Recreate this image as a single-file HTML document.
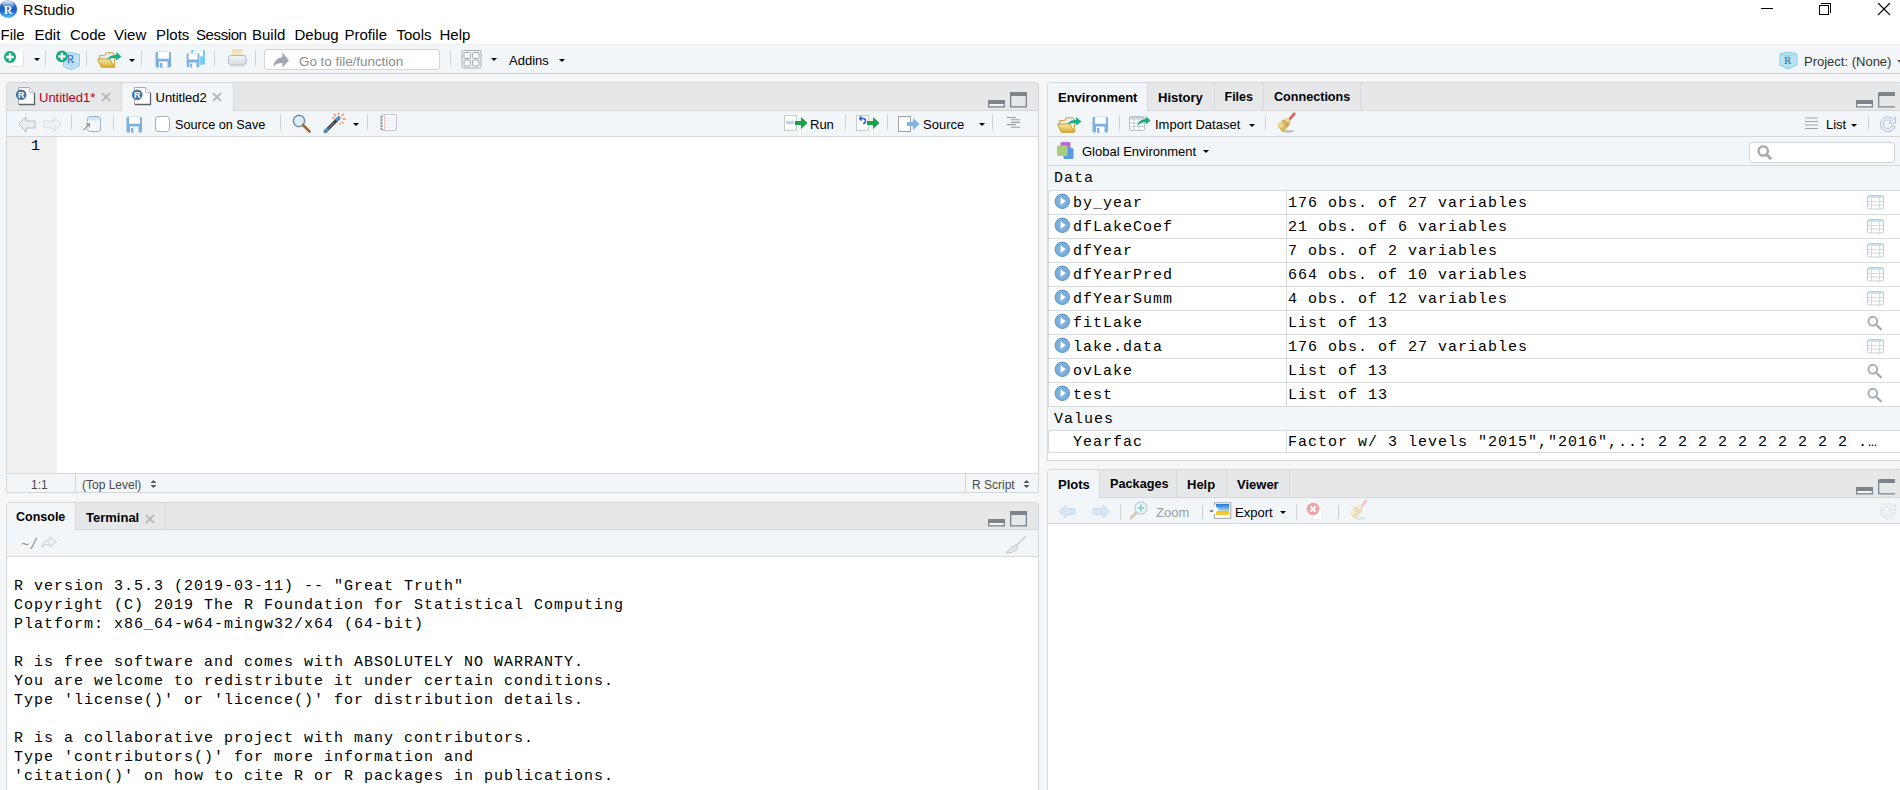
<!DOCTYPE html>
<html><head><meta charset="utf-8">
<style>
*{box-sizing:border-box;margin:0;padding:0}
html,body{width:1900px;height:790px;overflow:hidden;background:#f5f6f8;font-family:"Liberation Sans",sans-serif;color:#000}
.a{position:absolute}
.t{position:absolute;white-space:pre;line-height:1}
.mono{font-family:"Liberation Mono",monospace;font-size:15px;letter-spacing:1px}
.sep{position:absolute;width:1px;background:linear-gradient(#f3f6f8,#c9ced2 20%,#c9ced2 80%,#f3f6f8)}
.pane{position:absolute;border:1px solid #d3d7da;border-radius:3px 3px 0 0;background:#fff;overflow:hidden}
.tabs{position:absolute;left:0;right:0;top:0;background:#e6e7e9;border-bottom:1px solid #d3d7da}
.tab{position:absolute;top:0;bottom:-1px;border-right:1px solid #d3d7da}
.tab.act{background:#f3f6f8;border-bottom:1px solid #f3f6f8}
.tb{position:absolute;left:0;right:0;background:#f3f6f8;border-bottom:1px solid #d3d7da}
.bold{font-weight:bold}
.dd{position:absolute;width:0;height:0;border-left:3px solid transparent;border-right:3px solid transparent;border-top:3px solid #000}
</style></head>
<body>
<!-- title bar -->
<div class="a" style="left:0;top:0;width:1900px;height:44px;background:#fff"></div>
<svg class="a" style="left:0;top:0" width="19" height="19" viewBox="0 0 19 19"><defs><linearGradient id="rg" x1="0" y1="0" x2="0" y2="1"><stop offset="0" stop-color="#3a78d0"/><stop offset="0.55" stop-color="#1d5cc4"/><stop offset="1" stop-color="#5cc0ee"/></linearGradient><linearGradient id="rh" x1="0" y1="0" x2="0" y2="1"><stop offset="0" stop-color="#ffffff" stop-opacity="0.85"/><stop offset="1" stop-color="#ffffff" stop-opacity="0.05"/></linearGradient></defs><circle cx="8.2" cy="9.2" r="8.9" fill="url(#rg)"/><ellipse cx="8.2" cy="4.2" rx="6" ry="3.6" fill="url(#rh)"/><text x="8.1" y="13.6" font-family="Liberation Serif" font-weight="bold" font-size="12" fill="#fff" text-anchor="middle">R</text></svg>
<div class="t" style="left:23px;top:3px;font-size:14.5px">RStudio</div>
<!-- window controls -->
<div class="a" style="left:1761px;top:8px;width:12px;height:1px;background:#000"></div>
<div class="a" style="left:1819px;top:5px;width:10px;height:10px;border:1px solid #000"></div>
<div class="a" style="left:1821px;top:3px;width:10px;height:10px;border-top:1px solid #000;border-right:1px solid #000"></div>
<svg class="a" style="left:1877px;top:2px" width="14" height="14"><path d="M1 1L13 13M13 1L1 13" stroke="#000" stroke-width="1.1"/></svg>
<!-- menu -->
<div class="t" style="left:0.5px;top:27px;font-size:15px">File</div>
<div class="t" style="left:34.5px;top:27px;font-size:15px">Edit</div>
<div class="t" style="left:70px;top:27px;font-size:15px">Code</div>
<div class="t" style="left:114px;top:27px;font-size:15px">View</div>
<div class="t" style="left:156px;top:27px;font-size:15px">Plots</div>
<div class="t" style="left:196px;top:27px;font-size:15px;letter-spacing:-0.4px">Session</div>
<div class="t" style="left:252px;top:27px;font-size:15px">Build</div>
<div class="t" style="left:294.5px;top:27px;font-size:15px">Debug</div>
<div class="t" style="left:344.5px;top:27px;font-size:15px">Profile</div>
<div class="t" style="left:396.5px;top:27px;font-size:15px">Tools</div>
<div class="t" style="left:439.5px;top:27px;font-size:15px">Help</div>

<!-- main toolbar -->
<div class="a" style="left:0;top:44px;width:1900px;height:30px;background:#f3f6f8;border-bottom:1px solid #cfd3d6;border-top:1px solid #eceef0"></div>
<div id="maintb">
 <!-- new file -->
 <div class="a" style="left:10px;top:51px;width:14px;height:16px;background:#fff;border:1px solid #dfe3e6;border-left:none;border-top:none"></div>
 <svg class="a" style="left:3px;top:50px" width="14" height="14"><circle cx="7" cy="7" r="6" fill="#16ac7c"/><path d="M7 3.2V10.8M3.2 7H10.8" stroke="#fff" stroke-width="2.4"/></svg>
 <div class="dd" style="left:34px;top:58px"></div>
 <div class="sep" style="left:45px;top:49px;height:19px"></div>
 <!-- new project -->
 <svg class="a" style="left:55px;top:50px" width="26" height="21"><path d="M8 3.5L16.5 2.5L24.5 4.5V15.5L16.5 19.8L8.5 16.5Z" fill="#c4e4f6" stroke="#8ccbe8" stroke-width="1"/><path d="M8 3.5L16 5.5L24.5 4.5M16 5.5V19.8M8.5 13L16 15.5L24.5 13" stroke="#9fd6ee" stroke-width="0.8" fill="none"/><text x="15.6" y="12.8" font-family="Liberation Serif" font-size="11.5" fill="#2f5fb8" text-anchor="middle">R</text><circle cx="6.9" cy="6.4" r="5.9" fill="#16ac7c"/><path d="M6.9 2.8V10M3.3 6.4H10.5" stroke="#fff" stroke-width="2.4"/></svg>
 <div class="sep" style="left:86px;top:49px;height:19px"></div>
 <!-- open -->
 <svg class="a" style="left:96.5px;top:51.5px" width="26" height="17" viewBox="0 0 26 17"><defs><linearGradient id="fg1" x1="0" y1="0" x2="0" y2="1"><stop offset="0" stop-color="#f7eaa8"/><stop offset="1" stop-color="#dcae32"/></linearGradient></defs><path d="M2.6 7V3.6H7.6L9.2 0.8H16L17.6 3V15" fill="#ebebea" stroke="#c9a132" stroke-width="1"/><path d="M0.6 7H12.6L17.4 15.2H4.4Z" fill="url(#fg1)" stroke="#c49a2a" stroke-width="1"/><path d="M10.6 7.2Q12.6 3 19 3V0.2L24.6 4.4L19 8.6V6Q14.2 6 10.6 7.2Z" fill="#17b088"/></svg>
 <div class="dd" style="left:129px;top:59px"></div>
 <div class="sep" style="left:141px;top:49px;height:19px"></div>
 <!-- save -->
 <svg class="a" style="left:155px;top:51px" width="17" height="18"><rect x="0.5" y="0.8" width="15.5" height="15.8" rx="1.6" fill="#7db1e2"/><rect x="3" y="1" width="11" height="6.7" fill="#fff"/><rect x="4" y="10.5" width="8.5" height="6.1" fill="#fff"/><rect x="5" y="12" width="2.5" height="4.6" fill="#7db1e2"/></svg>
 <!-- save all -->
 <svg class="a" style="left:185px;top:49px" width="22" height="20"><rect x="6" y="1" width="14" height="14.7" rx="1.5" fill="#78c9ee"/><rect x="8.5" y="1.3" width="9.5" height="6" fill="#fff"/><path d="M18 7.3V15.7" stroke="#fff" stroke-width="0"/><rect x="1.3" y="4.1" width="13.4" height="14.5" rx="1.5" fill="#7db1e2" stroke="#fff" stroke-width="0.6"/><rect x="3.6" y="4.5" width="9" height="6" fill="#fff"/><rect x="4.3" y="13.5" width="7.2" height="5" fill="#fff"/><rect x="5.2" y="14.6" width="2" height="3.9" fill="#7db1e2"/></svg>
 <div class="sep" style="left:214px;top:49px;height:19px"></div>
 <!-- print -->
 <svg class="a" style="left:227px;top:48px" width="21" height="20"><defs><linearGradient id="pp" x1="0" y1="0" x2="0" y2="1"><stop offset="0" stop-color="#f0dcaa"/><stop offset="1" stop-color="#f6ecd0"/></linearGradient><linearGradient id="pb" x1="0" y1="0" x2="0" y2="1"><stop offset="0" stop-color="#f4f6f9"/><stop offset="1" stop-color="#d6dce4"/></linearGradient></defs><rect x="4.8" y="1.2" width="10.3" height="8.6" fill="url(#pp)"/><rect x="1.5" y="7.5" width="17.5" height="9" rx="2" fill="url(#pb)" stroke="#aeb6c0" stroke-width="1"/><rect x="3" y="16.3" width="14.5" height="2.4" fill="#d4d9df"/></svg>
 <div class="sep" style="left:255px;top:49px;height:19px"></div>
 <!-- go to file -->
 <div class="a" style="left:264px;top:49px;width:176px;height:21px;background:#fff;border:1px solid #d3d7da;border-radius:3px"></div>
 <svg class="a" style="left:272px;top:51px" width="19" height="18"><path d="M1 16.2Q2.5 7 10.4 6V1.5L17 9.5L10.4 16.8V12Q4 12 1 16.2Z" fill="#a0a6b2"/></svg>
 <div class="t" style="left:299px;top:55px;font-size:13.4px;color:#8a8d90">Go to file/function</div>
 <div class="sep" style="left:450px;top:49px;height:19px"></div>
 <!-- grid -->
 <svg class="a" style="left:461px;top:50px" width="21" height="19"><rect x="1" y="0.5" width="19" height="17.5" rx="1.5" fill="none" stroke="#a6acb2"/><rect x="3" y="2.5" width="6.5" height="6" rx="1" fill="none" stroke="#a6acb2"/><rect x="11.5" y="2.5" width="6.5" height="6" rx="1" fill="none" stroke="#a6acb2"/><rect x="3" y="10" width="6.5" height="6" rx="1" fill="none" stroke="#a6acb2"/><rect x="11.5" y="10" width="6.5" height="6" rx="1" fill="none" stroke="#a6acb2"/></svg>
 <div class="dd" style="left:491px;top:58px"></div>
 <div class="t" style="left:509px;top:54px;font-size:13px">Addins</div>
 <div class="dd" style="left:559px;top:59px"></div>
 <!-- project -->
 <svg class="a" style="left:1778px;top:51px" width="21" height="19"><path d="M2 3L10 1L19 3L19 14L10 18L2 14Z" fill="#b9e3f3" stroke="#86cde6" stroke-width="1"/><path d="M10 4V18M2 3L10 5L19 3" stroke="#8fd3ea" stroke-width="0.8" fill="none"/><text x="6" y="13" font-family="Liberation Serif" font-size="11" fill="#3a67b0">R</text></svg>
 <div class="t" style="left:1804px;top:55px;font-size:13px;color:#333">Project: (None)</div>
 <div class="dd" style="left:1897px;top:60px;border-top-color:#555"></div>
</div>

<!-- EDITOR PANE -->
<div class="a" style="left:6px;top:82px;width:1033px;height:411px;border:1px solid #d3d7da;border-radius:3px 3px 0 0;background:#fff"></div>
<div class="a" style="left:7px;top:83px;width:1031px;height:28px;background:#e6e7e9;border-bottom:1px solid #d3d7da;border-radius:2px 2px 0 0"></div>
<div class="a" style="left:7px;top:83px;width:115px;height:27px;border-right:1px solid #d6dadd"></div>
<div class="a" style="left:121px;top:83px;width:113px;height:28px;background:#f3f6f8;border-left:1px solid #d6dadd;border-right:1px solid #d6dadd;border-radius:3px 3px 0 0"></div>
<svg class="a" style="left:14px;top:87px" width="22" height="19"><path d="M4.5 0.5H15.5L20.5 5.5V17.5H4.5Z" fill="#fff" stroke="#a8acb0" stroke-width="1"/><path d="M5 17.5H20.5V5.5" stroke="#5f6468" stroke-width="1.3" fill="none"/><path d="M15.5 0.5V5.5H20.5" fill="#f2f2f2" stroke="#b8bcc0" stroke-width="0.8"/><circle cx="7.2" cy="7.8" r="5.3" fill="#4a72a6"/><text x="7.2" y="11.3" font-family="Liberation Sans" font-weight="bold" font-size="9" fill="#fff" text-anchor="middle">R</text></svg>
<div class="t" style="left:39px;top:91px;font-size:13px;color:#b4001e">Untitled1*</div>
<svg class="a" style="left:101px;top:92px" width="10" height="10"><path d="M1 1L9 9M9 1L1 9" stroke="#b9b9b9" stroke-width="1.8"/></svg>
<svg class="a" style="left:130px;top:87px" width="22" height="19"><path d="M4.5 0.5H15.5L20.5 5.5V17.5H4.5Z" fill="#fff" stroke="#a8acb0" stroke-width="1"/><path d="M5 17.5H20.5V5.5" stroke="#5f6468" stroke-width="1.3" fill="none"/><path d="M15.5 0.5V5.5H20.5" fill="#f2f2f2" stroke="#b8bcc0" stroke-width="0.8"/><circle cx="7.2" cy="7.8" r="5.3" fill="#4a72a6"/><text x="7.2" y="11.3" font-family="Liberation Sans" font-weight="bold" font-size="9" fill="#fff" text-anchor="middle">R</text></svg>
<div class="t" style="left:155.5px;top:91px;font-size:13px">Untitled2</div>
<svg class="a" style="left:212px;top:92px" width="10" height="10"><path d="M1 1L9 9M9 1L1 9" stroke="#b9b9b9" stroke-width="1.8"/></svg>
<svg class="a" style="left:987px;top:92px" width="40" height="17"><rect x="1.65" y="8.65" width="15.7" height="6.2" fill="#f4f4f4" stroke="#7d848a" stroke-width="1.3"/><path d="M1 12V10Q1 8 3 8H16Q18 8 18 10V12Z" fill="#7d848a"/><rect x="23.65" y="0.65" width="15.7" height="14.2" fill="none" stroke="#7d848a" stroke-width="1.3"/><path d="M23 4V2Q23 0 25 0H38Q40 0 40 2V4Z" fill="#7d848a"/></svg>
<!-- editor toolbar -->
<div class="a" style="left:7px;top:111px;width:1031px;height:26px;background:#f3f6f8;border-bottom:1px solid #d3d7da"></div>
<svg class="a" style="left:18px;top:116px" width="44" height="17"><path d="M1 8L8 1V5H17V12H8V16Z" fill="#ebedef" stroke="#b4b9be" stroke-width="1"/><path d="M43 8L36 1V5H26V12H36V16Z" fill="#eef1f3" stroke="#d6dadd" stroke-width="1"/></svg>
<div class="sep" style="left:71px;top:113px;height:19px"></div>
<svg class="a" style="left:82px;top:116px" width="20" height="17"><rect x="5.5" y="0.5" width="13" height="15" rx="2.5" fill="#f4f6f9" stroke="#9fb3c8"/><rect x="6" y="1" width="12" height="3.5" rx="1.5" fill="#cfe5f8"/><path d="M1.5 14L7 8.5M4 8H7.5V11.5" stroke="#fff" stroke-width="3.2" fill="none"/><path d="M1.5 14L7 8.5M4 8H7.5V11.5" stroke="#8a97a5" stroke-width="1.3" fill="none"/></svg>
<div class="sep" style="left:113px;top:113px;height:19px"></div>
<svg class="a" style="left:126px;top:116px" width="17" height="18"><rect x="0.5" y="0.8" width="15.5" height="15.8" rx="1.6" fill="#7db1e2"/><rect x="3" y="1" width="11" height="6.7" fill="#fff"/><rect x="4" y="10.5" width="8.5" height="6.1" fill="#fff"/><rect x="5" y="12" width="2.5" height="4.6" fill="#7db1e2"/></svg>
<div class="a" style="left:155px;top:116px;width:15px;height:16px;background:#fff;border:1px solid #a9aeb3;border-radius:3px"></div>
<div class="t" style="left:175px;top:119px;font-size:12.7px">Source on Save</div>
<div class="sep" style="left:280px;top:113px;height:19px"></div>
<svg class="a" style="left:292px;top:114px" width="20" height="20"><circle cx="7" cy="7" r="5.6" fill="#dfeefa" stroke="#7f95aa" stroke-width="1.6"/><path d="M11 11L17.5 17.5" stroke="#9a6a3a" stroke-width="2.6" stroke-linecap="round"/></svg>
<svg class="a" style="left:323px;top:110px" width="26" height="24"><path d="M2.4 21.4L15.7 8.1" stroke="#3c4248" stroke-width="3.4" stroke-linecap="round"/><path d="M3.6 20.2L11 12.8" stroke="#8a9096" stroke-width="1"/><path d="M2.4 21.4L3.9 19.9M14.4 9.4L15.7 8.1" stroke="#4a8ec4" stroke-width="3.4" stroke-linecap="round"/><path d="M15.6 2.8V5.2M18.6 6L21 3.6M19.6 9H22.6M18.6 11.6L20.6 13.6M16.4 13L17.2 14.6M9 7.6L12 8.2M10.6 3.6L13 6" stroke="#f3875a" stroke-width="1.3"/></svg>
<div class="dd" style="left:353px;top:123px"></div>
<div class="sep" style="left:367px;top:113px;height:19px"></div>
<svg class="a" style="left:379px;top:114px" width="19" height="18"><rect x="2.5" y="0.5" width="15" height="16" rx="1.5" fill="#fff" stroke="#c2c7cc"/><path d="M5 4H16M5 7H16M5 10H16M5 13H16" stroke="#d8e4f0" stroke-width="1"/><path d="M5.5 1V16" stroke="#f0b0b0" stroke-width="0.8"/><path d="M1 3H4M1 6H4M1 9H4M1 12H4M1 15H4" stroke="#7a7f85" stroke-width="1"/></svg>
<!-- run -->
<svg class="a" style="left:784px;top:115px" width="25" height="17"><rect x="0.5" y="0.5" width="12" height="15" fill="#fff" stroke="#c8cdd2"/><rect x="2" y="6" width="8" height="3" fill="#b8d4f0"/><path d="M11 6H17V2L23.5 8L17 14V10H11Z" fill="#1aa04a"/></svg>
<div class="t" style="left:810px;top:118px;font-size:13px">Run</div>
<div class="sep" style="left:845px;top:113px;height:19px"></div>
<svg class="a" style="left:856px;top:115px" width="25" height="17"><rect x="0.5" y="0.5" width="12" height="15" fill="#fff" stroke="#c8cdd2"/><path d="M3.5 3.5L5.5 1.5M3.5 3.5L5.5 5.5M3.5 3.5H7Q9.5 3.5 9.5 6Q9.5 8.5 7 8.5" stroke="#2a62d8" stroke-width="1.6" fill="none"/><path d="M11 6H17V2L23.5 8L17 14V10H11Z" fill="#1aa04a"/></svg>
<div class="sep" style="left:887px;top:113px;height:19px"></div>
<svg class="a" style="left:898px;top:116px" width="25" height="17"><rect x="0.5" y="0.5" width="12" height="15" fill="#fff" stroke="#9ea4aa"/><path d="M9 6H15V2L21.5 8L15 14V10H9Z" fill="#7fb4e6"/></svg>
<div class="t" style="left:923px;top:118px;font-size:13px">Source</div>
<div class="dd" style="left:979px;top:123px"></div>
<div class="sep" style="left:992px;top:113px;height:19px"></div>
<svg class="a" style="left:1006px;top:116px" width="15" height="13"><path d="M1 1.5H10M5 3.8H14M5 6.4H14M1 8.6H10M5 11.3H14" stroke="#9aa0a5" stroke-width="1.1"/></svg>
<!-- gutter -->
<div class="a" style="left:7px;top:137px;width:50px;height:336px;background:#f0f0f0"></div>
<div class="t mono" style="left:31px;top:139px">1</div>
<!-- status bar -->
<div class="a" style="left:7px;top:473px;width:1031px;height:19px;background:#f3f6f8;border-top:1px solid #d3d7da"></div>
<div class="t" style="left:31px;top:479px;font-size:12px;color:#4a4a4a">1:1</div>
<div class="a" style="left:75px;top:474px;width:1px;height:18px;background:#d3d7da"></div>
<div class="t" style="left:82px;top:479px;font-size:12px;color:#4a4a4a">(Top Level)</div>
<svg class="a" style="left:150px;top:479px" width="7" height="10"><path d="M0.5 4L3.5 1L6.5 4ZM0.5 6L3.5 9L6.5 6Z" fill="#555"/></svg>
<div class="a" style="left:965px;top:474px;width:1px;height:18px;background:#d3d7da"></div>
<div class="t" style="left:972px;top:479px;font-size:12px;color:#4a4a4a">R Script</div>
<svg class="a" style="left:1023px;top:479px" width="7" height="10"><path d="M0.5 4L3.5 1L6.5 4ZM0.5 6L3.5 9L6.5 6Z" fill="#555"/></svg>
<!-- CONSOLE PANE -->
<div class="a" style="left:6px;top:502px;width:1033px;height:300px;border:1px solid #d3d7da;border-radius:3px 3px 0 0;background:#fff"></div>
<div class="a" style="left:7px;top:503px;width:1031px;height:27px;background:#e6e7e9;border-bottom:1px solid #d3d7da;border-radius:2px 2px 0 0"></div>
<div class="a" style="left:7px;top:503px;width:69px;height:27px;background:#f3f6f8;border-right:1px solid #d6dadd;border-radius:2px 3px 0 0"></div>
<div class="a" style="left:76px;top:503px;width:90px;height:26px;border-right:1px solid #d6dadd;border-radius:0 3px 0 0"></div>
<div class="t bold" style="left:16px;top:511px;font-size:12.5px">Console</div>
<div class="t bold" style="left:86px;top:511px;font-size:13px">Terminal</div>
<svg class="a" style="left:145px;top:514px" width="10" height="10"><path d="M1 1L9 9M9 1L1 9" stroke="#b9b9b9" stroke-width="1.8"/></svg>
<svg class="a" style="left:987px;top:511px" width="40" height="17"><rect x="1.65" y="8.65" width="15.7" height="6.2" fill="#f4f4f4" stroke="#7d848a" stroke-width="1.3"/><path d="M1 12V10Q1 8 3 8H16Q18 8 18 10V12Z" fill="#7d848a"/><rect x="23.65" y="0.65" width="15.7" height="14.2" fill="none" stroke="#7d848a" stroke-width="1.3"/><path d="M23 4V2Q23 0 25 0H38Q40 0 40 2V4Z" fill="#7d848a"/></svg>
<div class="a" style="left:7px;top:530px;width:1031px;height:27px;background:#f3f6f8;border-bottom:1px solid #d3d7da"></div>
<div class="t mono" style="left:21px;top:538px;color:#8a8a8a;font-size:14px;letter-spacing:0">~/</div>
<svg class="a" style="left:41px;top:536px" width="17" height="12"><path d="M1 11Q2 4 9 4V1L15.5 6L9 11V8Q4 8 1 11Z" fill="#eef1f4" stroke="#c6ccd2" stroke-width="1"/></svg>
<svg class="a" style="left:1004px;top:534px" width="24" height="20"><path d="M12 12L22 2" stroke="#c8cdd2" stroke-width="1.5"/><path d="M2 18Q6 17 8 13L12 11L14 14Q12 18 4 19Z" fill="#e4e7ea" stroke="#c4c9ce" stroke-width="1"/></svg>
<pre class="t mono" style="left:14px;top:577px;line-height:19px">R version 3.5.3 (2019-03-11) -- &quot;Great Truth&quot;
Copyright (C) 2019 The R Foundation for Statistical Computing
Platform: x86_64-w64-mingw32/x64 (64-bit)

R is free software and comes with ABSOLUTELY NO WARRANTY.
You are welcome to redistribute it under certain conditions.
Type &#x27;license()&#x27; or &#x27;licence()&#x27; for distribution details.

R is a collaborative project with many contributors.
Type &#x27;contributors()&#x27; for more information and
&#x27;citation()&#x27; on how to cite R or R packages in publications.</pre>
<!-- ENV PANE -->
<div class="a" style="left:1047px;top:82px;width:860px;height:379px;border:1px solid #d3d7da;border-radius:3px 3px 0 0;background:#fff"></div>
<div class="a" style="left:1048px;top:83px;width:852px;height:28px;background:#e6e7e9;border-bottom:1px solid #d3d7da;border-radius:2px 2px 0 0"></div>
<div class="a" style="left:1048px;top:83px;width:100px;height:28px;background:#f3f6f8;border-right:1px solid #d6dadd;border-radius:2px 3px 0 0"></div>
<div class="a" style="left:1148px;top:83px;width:67px;height:27px;border-right:1px solid #d6dadd"></div>
<div class="a" style="left:1215px;top:83px;width:49px;height:27px;border-right:1px solid #d6dadd"></div>
<div class="a" style="left:1264px;top:83px;width:97px;height:27px;border-right:1px solid #d6dadd"></div>
<div class="t bold" style="left:1058px;top:91px;font-size:13px">Environment</div>
<div class="t bold" style="left:1158px;top:91px;font-size:13px">History</div>
<div class="t bold" style="left:1224.5px;top:91px;font-size:12.5px">Files</div>
<div class="t bold" style="left:1274px;top:91px;font-size:12.6px">Connections</div>
<svg class="a" style="left:1855px;top:92px" width="40" height="17"><rect x="1.65" y="8.65" width="15.7" height="6.2" fill="#f4f4f4" stroke="#7d848a" stroke-width="1.3"/><path d="M1 12V10Q1 8 3 8H16Q18 8 18 10V12Z" fill="#7d848a"/><path d="M40 14.85H23.65V0.65" fill="none" stroke="#7d848a" stroke-width="1.3"/><path d="M23 4V2Q23 0 25 0H40V4Z" fill="#7d848a"/></svg>
<!-- env toolbar -->
<div class="a" style="left:1048px;top:111px;width:852px;height:26px;background:#f3f6f8;border-bottom:1px solid #d3d7da"></div>
<svg class="a" style="left:1057px;top:117px" width="26" height="17" viewBox="0 0 26 17"><defs><linearGradient id="fg2" x1="0" y1="0" x2="0" y2="1"><stop offset="0" stop-color="#f7eaa8"/><stop offset="1" stop-color="#dcae32"/></linearGradient></defs><path d="M2.6 7V3.6H7.6L9.2 0.8H16L17.6 3V15" fill="#ebebea" stroke="#c9a132" stroke-width="1"/><path d="M0.6 7H12.6L17.4 15.2H4.4Z" fill="url(#fg2)" stroke="#c49a2a" stroke-width="1"/><path d="M10.6 7.2Q12.6 3 19 3V0.2L24.6 4.4L19 8.6V6Q14.2 6 10.6 7.2Z" fill="#17b088"/></svg>
<svg class="a" style="left:1092px;top:116px" width="17" height="18"><rect x="0.5" y="0.8" width="15.5" height="15.8" rx="1.6" fill="#7db1e2"/><rect x="3" y="1" width="11" height="6.7" fill="#fff"/><rect x="4" y="10.5" width="8.5" height="6.1" fill="#fff"/><rect x="5" y="12" width="2.5" height="4.6" fill="#7db1e2"/></svg>
<div class="sep" style="left:1119px;top:114px;height:18px"></div>
<svg class="a" style="left:1128px;top:114px" width="24" height="19"><rect x="1.5" y="2.5" width="15" height="14" rx="1" fill="#fff" stroke="#b8c0c8"/><rect x="2" y="3" width="14" height="2.5" fill="#c8d0d8"/><path d="M6 5V16M11 5V16M2 9H16M2 12.5H16" stroke="#c0c8d0" stroke-width="0.9"/><path d="M9 12Q11 5 18 5L18 2.5L22.5 6.5L18 10.5L18 8Q13 8 9 12Z" fill="#22a67a"/></svg>
<div class="t" style="left:1155px;top:118px;font-size:13px">Import Dataset</div>
<div class="dd" style="left:1249px;top:124px"></div>
<div class="sep" style="left:1265px;top:114px;height:18px"></div>
<svg class="a" style="left:1276px;top:112px" width="22" height="22"><ellipse cx="12" cy="19.3" rx="6.2" ry="1.4" fill="#8f969c" opacity="0.55"/><path d="M13.6 7.3L18.2 1.8" stroke="#d8605a" stroke-width="2.6" stroke-linecap="round"/><path d="M7 7.6Q10.5 5.6 13.9 7.4Q15 10.5 13.4 13L7.6 20Q4.5 19.6 1.2 12.8Z" fill="#d6b85e"/><path d="M7 7.6Q10.5 5.6 13.9 7.4Q14 9 12 11L5 16Q3 15 1.2 12.8Z" fill="#f2e4a4" opacity="0.7"/><path d="M7 8.3L12.6 12.2M6.3 10L11.6 14.2" stroke="#b07a30" stroke-width="1"/></svg>
<svg class="a" style="left:1804px;top:117px" width="15" height="12"><path d="M1 1H14M1 4.5H14M1 8H14M1 11.5H14" stroke="#9fa5aa" stroke-width="1"/></svg>
<div class="t" style="left:1826px;top:118px;font-size:13px">List</div>
<div class="dd" style="left:1851px;top:124px"></div>
<div class="sep" style="left:1868px;top:114px;height:18px"></div>
<svg class="a" style="left:1878px;top:114px" width="20" height="20"><path d="M15.6 5.2A7.6 7.6 0 1 0 17.2 12.4L14 11.4A4.4 4.4 0 1 1 13 7.2L11 9.2H17.6V2.6Z" fill="#e4ebf3" stroke="#b4c2d0" stroke-width="0.9" stroke-linejoin="round"/></svg>
<!-- global env row -->
<div class="a" style="left:1048px;top:137px;width:852px;height:29px;background:#f3f6f8;border-bottom:1px solid #d3d7da"></div>
<svg class="a" style="left:1056px;top:141px" width="20" height="20"><rect x="4.5" y="1" width="10" height="10" rx="1.5" fill="#b86ad0"/><rect x="7.5" y="7" width="10" height="11" rx="1.5" fill="#5c9ae8"/><rect x="1" y="4.5" width="10.5" height="10.5" rx="1.5" fill="#a8cc80"/></svg>
<div class="t" style="left:1082px;top:145px;font-size:13px">Global Environment</div>
<div class="dd" style="left:1203px;top:150px"></div>
<div class="a" style="left:1749px;top:142px;width:146px;height:21px;background:#fff;border:1px solid #d0d4d8;border-radius:3px"></div>
<svg class="a" style="left:1756px;top:144px" width="18" height="18"><circle cx="7.2" cy="7" r="4.7" fill="none" stroke="#a3a9ad" stroke-width="2.3"/><path d="M10.6 10.5L15.2 15.2" stroke="#a3a9ad" stroke-width="3"/></svg>
<!-- data header -->
<div class="a" style="left:1048px;top:166px;width:852px;height:287px;background:#f3f6f8"></div>
<div class="t mono" style="left:1054px;top:171px">Data</div>
<div class="a" style="left:1048px;top:190px;width:852px;height:25px;background:#fff;border-top:1px solid #d6dadd;border-bottom:1px solid #d6dadd;border-left:1px solid #d6dadd"></div>
<div class="a" style="left:1286px;top:190px;width:1px;height:25px;background:#d6dadd"></div>
<svg class="a" style="left:1054px;top:193px" width="17" height="17"><circle cx="8.3" cy="8.3" r="7.2" fill="#7aaedc" stroke="#5f95c8" stroke-width="1"/><path d="M6.5 4.3L11.7 8.3L6.5 12.3Z" fill="#fff"/></svg>
<div class="t mono" style="left:1073px;top:196px">by_year</div>
<div class="t mono" style="left:1288px;top:196px">176 obs. of 27 variables</div>
<svg class="a" style="left:1867px;top:195px" width="18" height="15"><rect x="0.5" y="0.5" width="16" height="13.5" rx="1.5" fill="#fff" stroke="#c4ccd2"/><rect x="1" y="1" width="15" height="2" fill="#c5e6f6"/><path d="M4.5 3V14M12.5 3V14M1 6.5H16M1 10H16" stroke="#d0d6db" stroke-width="0.9"/></svg>
<div class="a" style="left:1048px;top:214px;width:852px;height:25px;background:#fff;border-top:1px solid #d6dadd;border-bottom:1px solid #d6dadd;border-left:1px solid #d6dadd"></div>
<div class="a" style="left:1286px;top:214px;width:1px;height:25px;background:#d6dadd"></div>
<svg class="a" style="left:1054px;top:217px" width="17" height="17"><circle cx="8.3" cy="8.3" r="7.2" fill="#7aaedc" stroke="#5f95c8" stroke-width="1"/><path d="M6.5 4.3L11.7 8.3L6.5 12.3Z" fill="#fff"/></svg>
<div class="t mono" style="left:1073px;top:220px">dfLakeCoef</div>
<div class="t mono" style="left:1288px;top:220px">21 obs. of 6 variables</div>
<svg class="a" style="left:1867px;top:219px" width="18" height="15"><rect x="0.5" y="0.5" width="16" height="13.5" rx="1.5" fill="#fff" stroke="#c4ccd2"/><rect x="1" y="1" width="15" height="2" fill="#c5e6f6"/><path d="M4.5 3V14M12.5 3V14M1 6.5H16M1 10H16" stroke="#d0d6db" stroke-width="0.9"/></svg>
<div class="a" style="left:1048px;top:238px;width:852px;height:25px;background:#fff;border-top:1px solid #d6dadd;border-bottom:1px solid #d6dadd;border-left:1px solid #d6dadd"></div>
<div class="a" style="left:1286px;top:238px;width:1px;height:25px;background:#d6dadd"></div>
<svg class="a" style="left:1054px;top:241px" width="17" height="17"><circle cx="8.3" cy="8.3" r="7.2" fill="#7aaedc" stroke="#5f95c8" stroke-width="1"/><path d="M6.5 4.3L11.7 8.3L6.5 12.3Z" fill="#fff"/></svg>
<div class="t mono" style="left:1073px;top:244px">dfYear</div>
<div class="t mono" style="left:1288px;top:244px">7 obs. of 2 variables</div>
<svg class="a" style="left:1867px;top:243px" width="18" height="15"><rect x="0.5" y="0.5" width="16" height="13.5" rx="1.5" fill="#fff" stroke="#c4ccd2"/><rect x="1" y="1" width="15" height="2" fill="#c5e6f6"/><path d="M4.5 3V14M12.5 3V14M1 6.5H16M1 10H16" stroke="#d0d6db" stroke-width="0.9"/></svg>
<div class="a" style="left:1048px;top:262px;width:852px;height:25px;background:#fff;border-top:1px solid #d6dadd;border-bottom:1px solid #d6dadd;border-left:1px solid #d6dadd"></div>
<div class="a" style="left:1286px;top:262px;width:1px;height:25px;background:#d6dadd"></div>
<svg class="a" style="left:1054px;top:265px" width="17" height="17"><circle cx="8.3" cy="8.3" r="7.2" fill="#7aaedc" stroke="#5f95c8" stroke-width="1"/><path d="M6.5 4.3L11.7 8.3L6.5 12.3Z" fill="#fff"/></svg>
<div class="t mono" style="left:1073px;top:268px">dfYearPred</div>
<div class="t mono" style="left:1288px;top:268px">664 obs. of 10 variables</div>
<svg class="a" style="left:1867px;top:267px" width="18" height="15"><rect x="0.5" y="0.5" width="16" height="13.5" rx="1.5" fill="#fff" stroke="#c4ccd2"/><rect x="1" y="1" width="15" height="2" fill="#c5e6f6"/><path d="M4.5 3V14M12.5 3V14M1 6.5H16M1 10H16" stroke="#d0d6db" stroke-width="0.9"/></svg>
<div class="a" style="left:1048px;top:286px;width:852px;height:25px;background:#fff;border-top:1px solid #d6dadd;border-bottom:1px solid #d6dadd;border-left:1px solid #d6dadd"></div>
<div class="a" style="left:1286px;top:286px;width:1px;height:25px;background:#d6dadd"></div>
<svg class="a" style="left:1054px;top:289px" width="17" height="17"><circle cx="8.3" cy="8.3" r="7.2" fill="#7aaedc" stroke="#5f95c8" stroke-width="1"/><path d="M6.5 4.3L11.7 8.3L6.5 12.3Z" fill="#fff"/></svg>
<div class="t mono" style="left:1073px;top:292px">dfYearSumm</div>
<div class="t mono" style="left:1288px;top:292px">4 obs. of 12 variables</div>
<svg class="a" style="left:1867px;top:291px" width="18" height="15"><rect x="0.5" y="0.5" width="16" height="13.5" rx="1.5" fill="#fff" stroke="#c4ccd2"/><rect x="1" y="1" width="15" height="2" fill="#c5e6f6"/><path d="M4.5 3V14M12.5 3V14M1 6.5H16M1 10H16" stroke="#d0d6db" stroke-width="0.9"/></svg>
<div class="a" style="left:1048px;top:310px;width:852px;height:25px;background:#fff;border-top:1px solid #d6dadd;border-bottom:1px solid #d6dadd;border-left:1px solid #d6dadd"></div>
<div class="a" style="left:1286px;top:310px;width:1px;height:25px;background:#d6dadd"></div>
<svg class="a" style="left:1054px;top:313px" width="17" height="17"><circle cx="8.3" cy="8.3" r="7.2" fill="#7aaedc" stroke="#5f95c8" stroke-width="1"/><path d="M6.5 4.3L11.7 8.3L6.5 12.3Z" fill="#fff"/></svg>
<div class="t mono" style="left:1073px;top:316px">fitLake</div>
<div class="t mono" style="left:1288px;top:316px">List of 13</div>
<svg class="a" style="left:1866px;top:315px" width="18" height="16"><circle cx="6.8" cy="6.2" r="4.4" fill="none" stroke="#a6acb0" stroke-width="1.9"/><path d="M10 9.5L15.5 15" stroke="#a6acb0" stroke-width="2.4"/></svg>
<div class="a" style="left:1048px;top:334px;width:852px;height:25px;background:#fff;border-top:1px solid #d6dadd;border-bottom:1px solid #d6dadd;border-left:1px solid #d6dadd"></div>
<div class="a" style="left:1286px;top:334px;width:1px;height:25px;background:#d6dadd"></div>
<svg class="a" style="left:1054px;top:337px" width="17" height="17"><circle cx="8.3" cy="8.3" r="7.2" fill="#7aaedc" stroke="#5f95c8" stroke-width="1"/><path d="M6.5 4.3L11.7 8.3L6.5 12.3Z" fill="#fff"/></svg>
<div class="t mono" style="left:1073px;top:340px">lake.data</div>
<div class="t mono" style="left:1288px;top:340px">176 obs. of 27 variables</div>
<svg class="a" style="left:1867px;top:339px" width="18" height="15"><rect x="0.5" y="0.5" width="16" height="13.5" rx="1.5" fill="#fff" stroke="#c4ccd2"/><rect x="1" y="1" width="15" height="2" fill="#c5e6f6"/><path d="M4.5 3V14M12.5 3V14M1 6.5H16M1 10H16" stroke="#d0d6db" stroke-width="0.9"/></svg>
<div class="a" style="left:1048px;top:358px;width:852px;height:25px;background:#fff;border-top:1px solid #d6dadd;border-bottom:1px solid #d6dadd;border-left:1px solid #d6dadd"></div>
<div class="a" style="left:1286px;top:358px;width:1px;height:25px;background:#d6dadd"></div>
<svg class="a" style="left:1054px;top:361px" width="17" height="17"><circle cx="8.3" cy="8.3" r="7.2" fill="#7aaedc" stroke="#5f95c8" stroke-width="1"/><path d="M6.5 4.3L11.7 8.3L6.5 12.3Z" fill="#fff"/></svg>
<div class="t mono" style="left:1073px;top:364px">ovLake</div>
<div class="t mono" style="left:1288px;top:364px">List of 13</div>
<svg class="a" style="left:1866px;top:363px" width="18" height="16"><circle cx="6.8" cy="6.2" r="4.4" fill="none" stroke="#a6acb0" stroke-width="1.9"/><path d="M10 9.5L15.5 15" stroke="#a6acb0" stroke-width="2.4"/></svg>
<div class="a" style="left:1048px;top:382px;width:852px;height:25px;background:#fff;border-top:1px solid #d6dadd;border-bottom:1px solid #d6dadd;border-left:1px solid #d6dadd"></div>
<div class="a" style="left:1286px;top:382px;width:1px;height:25px;background:#d6dadd"></div>
<svg class="a" style="left:1054px;top:385px" width="17" height="17"><circle cx="8.3" cy="8.3" r="7.2" fill="#7aaedc" stroke="#5f95c8" stroke-width="1"/><path d="M6.5 4.3L11.7 8.3L6.5 12.3Z" fill="#fff"/></svg>
<div class="t mono" style="left:1073px;top:388px">test</div>
<div class="t mono" style="left:1288px;top:388px">List of 13</div>
<svg class="a" style="left:1866px;top:387px" width="18" height="16"><circle cx="6.8" cy="6.2" r="4.4" fill="none" stroke="#a6acb0" stroke-width="1.9"/><path d="M10 9.5L15.5 15" stroke="#a6acb0" stroke-width="2.4"/></svg>

<div class="t mono" style="left:1054px;top:412px">Values</div>
<div class="a" style="left:1048px;top:430px;width:852px;height:23px;background:#fff;border-top:1px solid #d6dadd;border-bottom:1px solid #d6dadd;border-left:1px solid #d6dadd"></div>
<div class="a" style="left:1286px;top:430px;width:1px;height:23px;background:#d6dadd"></div>
<div class="t mono" style="left:1073px;top:435px">Yearfac</div>
<div class="t mono" style="left:1288px;top:435px">Factor w/ 3 levels "2015","2016",..: 2 2 2 2 2 2 2 2 2 2 .…</div>
<div class="a" style="left:1048px;top:453px;width:852px;height:7px;background:#fff"></div>
<!-- PLOTS PANE -->
<div class="a" style="left:1047px;top:469px;width:860px;height:331px;border:1px solid #d3d7da;border-radius:3px 3px 0 0;background:#fff"></div>
<div class="a" style="left:1048px;top:470px;width:852px;height:28px;background:#e6e7e9;border-bottom:1px solid #d3d7da;border-radius:2px 2px 0 0"></div>
<div class="a" style="left:1048px;top:470px;width:52px;height:28px;background:#f3f6f8;border-right:1px solid #d6dadd;border-radius:2px 3px 0 0"></div>
<div class="a" style="left:1100px;top:470px;width:77px;height:27px;border-right:1px solid #d6dadd"></div>
<div class="a" style="left:1177px;top:470px;width:50px;height:26px;border-right:1px solid #d6dadd"></div>
<div class="a" style="left:1227px;top:470px;width:63px;height:26px;border-right:1px solid #d6dadd"></div>
<div class="t bold" style="left:1058px;top:478px;font-size:13px">Plots</div>
<div class="t bold" style="left:1110px;top:478px;font-size:12.7px">Packages</div>
<div class="t bold" style="left:1187px;top:478px;font-size:13px">Help</div>
<div class="t bold" style="left:1237px;top:478px;font-size:13px">Viewer</div>
<svg class="a" style="left:1855px;top:479px" width="40" height="17"><rect x="1.65" y="8.65" width="15.7" height="6.2" fill="#f4f4f4" stroke="#7d848a" stroke-width="1.3"/><path d="M1 12V10Q1 8 3 8H16Q18 8 18 10V12Z" fill="#7d848a"/><path d="M40 14.85H23.65V0.65" fill="none" stroke="#7d848a" stroke-width="1.3"/><path d="M23 4V2Q23 0 25 0H40V4Z" fill="#7d848a"/></svg>
<div class="a" style="left:1048px;top:498px;width:852px;height:26px;background:#f3f6f8;border-bottom:1px solid #d3d7da"></div>
<svg class="a" style="left:1058px;top:504px" width="54" height="16"><path d="M1 7.5L8 1V4.5H17V10.5H8V14Z" fill="#d6e6f4" stroke="#c4d8ea" stroke-width="0.8"/><path d="M52 7.5L45 1V4.5H35V10.5H45V14Z" fill="#d6e6f4" stroke="#c4d8ea" stroke-width="0.8"/></svg>
<div class="sep" style="left:1120px;top:503px;height:18px"></div>
<svg class="a" style="left:1129px;top:500px" width="20" height="20"><path d="M2 18L7 13" stroke="#d8c8b0" stroke-width="2.6" stroke-linecap="round"/><circle cx="12" cy="8" r="6" fill="#eef6fa" stroke="#c6d2da" stroke-width="1.4"/><path d="M12 4.5V11.5M8.5 8H15.5" stroke="#8ad8c8" stroke-width="2"/></svg>
<div class="t" style="left:1156px;top:506px;font-size:13px;color:#9a9ea2">Zoom</div>
<div class="sep" style="left:1202px;top:503px;height:18px"></div>
<svg class="a" style="left:1208px;top:501px" width="25" height="19"><defs><linearGradient id="sky" x1="0" y1="0" x2="0" y2="1"><stop offset="0" stop-color="#1a78d8"/><stop offset="1" stop-color="#a8d4f0"/></linearGradient><linearGradient id="sand" x1="0" y1="0" x2="0" y2="1"><stop offset="0" stop-color="#e8c020"/><stop offset="1" stop-color="#f4d040"/></linearGradient></defs><rect x="6.4" y="1.8" width="16.4" height="15.6" fill="#fff" stroke="#a0a6ac" stroke-width="1"/><rect x="8" y="3" width="13.2" height="6.8" fill="url(#sky)"/><rect x="8" y="9.8" width="13.2" height="4.4" fill="url(#sand)"/><rect x="2" y="9" width="4.5" height="2" fill="#8a8a8a"/><path d="M5.2 3.8L11.2 8.6L5.2 13.4Z" fill="#fff"/></svg>
<div class="t" style="left:1235px;top:506px;font-size:13px">Export</div>
<div class="dd" style="left:1280px;top:511px"></div>
<div class="sep" style="left:1296px;top:503px;height:18px"></div>
<svg class="a" style="left:1306px;top:502px" width="18" height="18"><rect x="6.5" y="6.5" width="10" height="11" fill="#fff" stroke="#eceef0"/><circle cx="7" cy="7" r="6.3" fill="#eaa6a6"/><path d="M4.5 4.5L9.5 9.5M9.5 4.5L4.5 9.5" stroke="#fff" stroke-width="1.8"/></svg>
<div class="sep" style="left:1338px;top:503px;height:18px"></div>
<svg class="a" style="left:1348px;top:499px" width="22" height="22"><ellipse cx="12" cy="19.3" rx="6.2" ry="1.4" fill="#c8ccd0" opacity="0.4"/><path d="M13.6 7.3L18.2 1.8" stroke="#eec6c0" stroke-width="2.6" stroke-linecap="round"/><path d="M7 7.6Q10.5 5.6 13.9 7.4Q15 10.5 13.4 13L7.6 20Q4.5 19.6 1.2 12.8Z" fill="#ece0bc"/><path d="M7 7.6Q10.5 5.6 13.9 7.4Q14 9 12 11L5 16Q3 15 1.2 12.8Z" fill="#f6f0dc" opacity="0.7"/><path d="M7 8.3L12.6 12.2M6.3 10L11.6 14.2" stroke="#e0c8a0" stroke-width="1"/></svg>
<svg class="a" style="left:1878px;top:501px" width="20" height="20"><path d="M15.6 5.2A7.6 7.6 0 1 0 17.2 12.4L14 11.4A4.4 4.4 0 1 1 13 7.2L11 9.2H17.6V2.6Z" fill="#eef2f7" stroke="#d8e0e8" stroke-width="0.9" stroke-linejoin="round"/></svg>
</body></html>
